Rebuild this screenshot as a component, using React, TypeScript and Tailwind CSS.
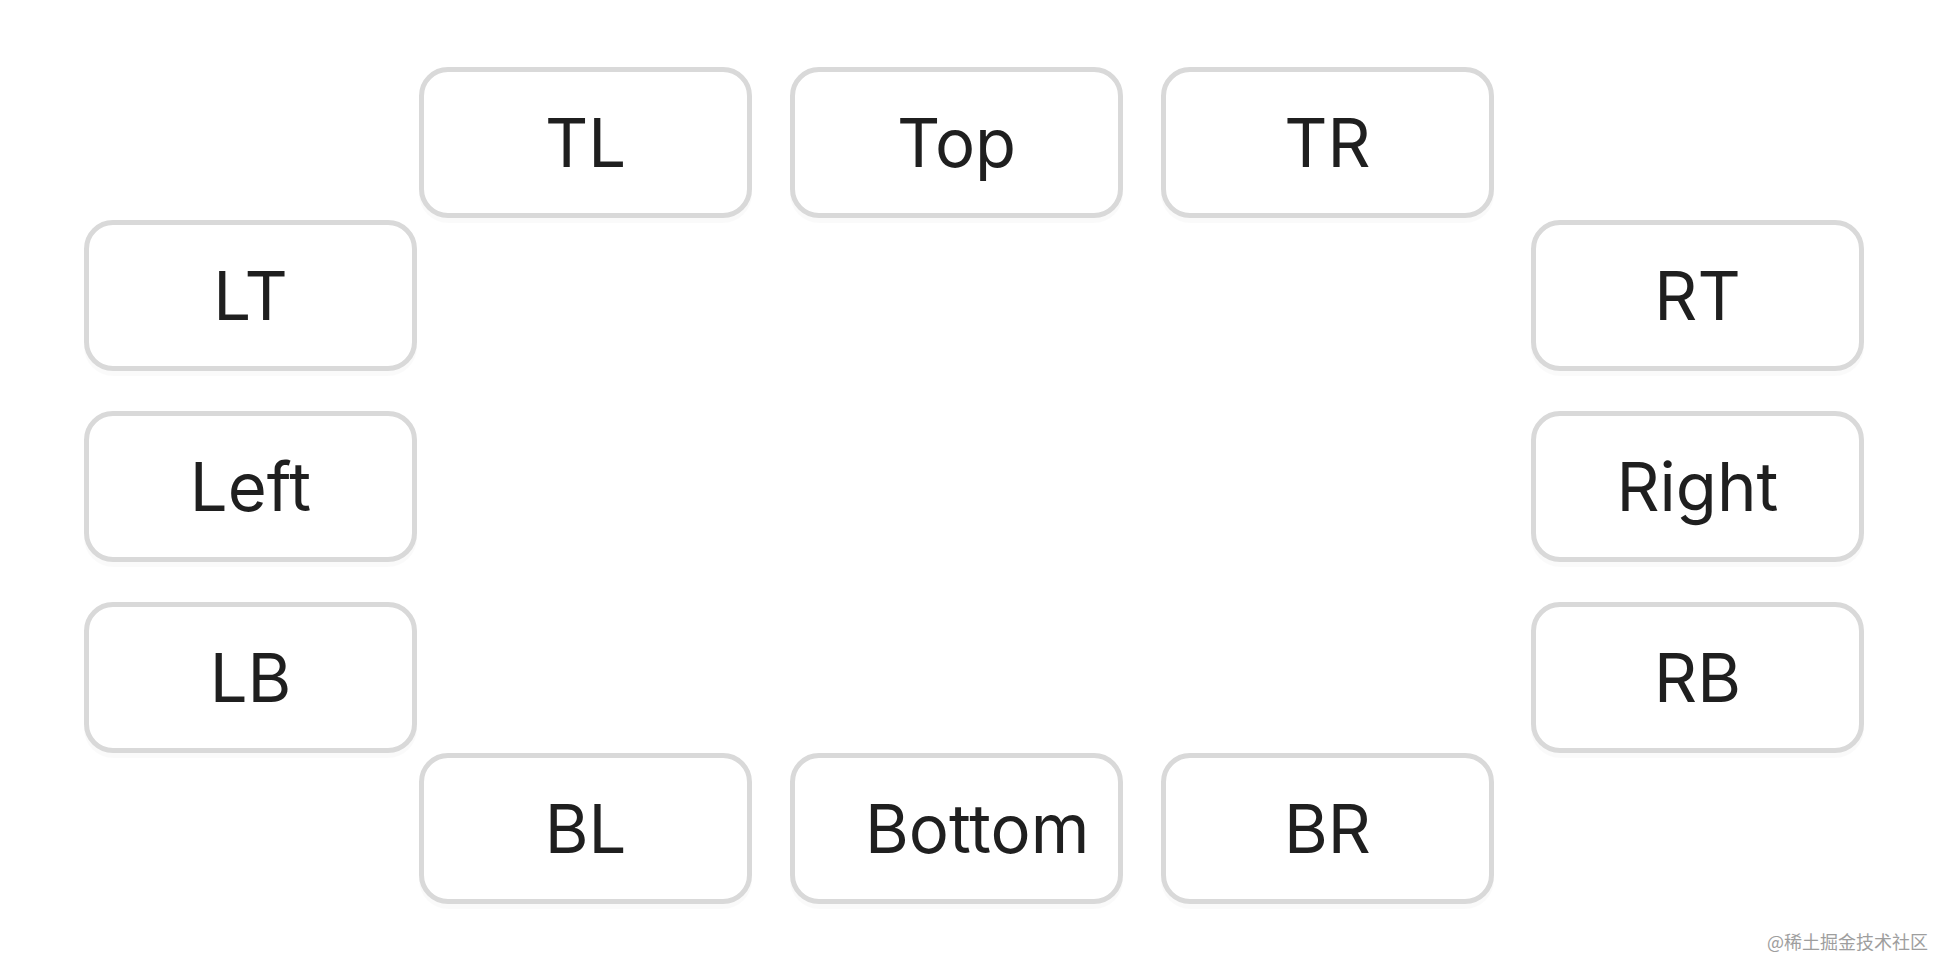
const btn =
  'flex h-[151px] w-[333px] shrink-0 items-center rounded-[29px] border-[5px] border-[#d9d9d9] bg-white px-[70px] text-[67px] leading-none text-[#1f1f1f] shadow-[0_5px_0_rgba(0,0,0,0.02)]';

function PlaceButton({ label }: { label: string }) {
  return (
    <button className={btn}>
      <span className="w-full whitespace-nowrap text-center">{label}</span>
    </button>
  );
}

export default function App() {
  return (
    <div
      className="relative h-[974px] w-[1954px] overflow-hidden bg-white pl-[84px] pt-[67px]"
      style={{ fontFamily: 'Inter, "Noto Sans", sans-serif' }}
    >
      {/* top row */}
      <div className="ml-[335px] flex gap-[38px]">
        <PlaceButton label="TL" />
        <PlaceButton label="Top" />
        <PlaceButton label="TR" />
      </div>

      {/* sides */}
      <div className="mt-[2px] flex w-[1780px] justify-between">
        <div className="flex flex-col gap-[40px]">
          <PlaceButton label="LT" />
          <PlaceButton label="Left" />
          <PlaceButton label="LB" />
        </div>
        <div className="flex flex-col gap-[40px]">
          <PlaceButton label="RT" />
          <PlaceButton label="Right" />
          <PlaceButton label="RB" />
        </div>
      </div>

      {/* bottom row */}
      <div className="ml-[335px] flex gap-[38px]">
        <PlaceButton label="BL" />
        <PlaceButton label="Bottom" />
        <PlaceButton label="BR" />
      </div>

      <div
        className="absolute bottom-[24px] right-[26px] text-[18px] leading-none text-[#9e9e9e]"
        style={{ fontFamily: '"Noto Sans CJK SC", sans-serif' }}
      >
        @稀土掘金技术社区
      </div>
    </div>
  );
}
